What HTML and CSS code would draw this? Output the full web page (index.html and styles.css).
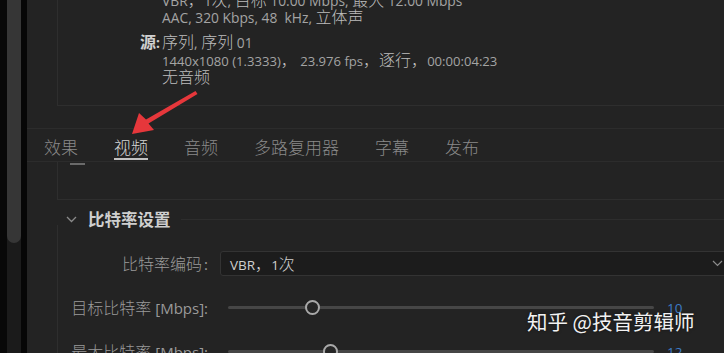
FILE: index.html
```html
<!DOCTYPE html>
<html lang="zh-CN">
<head>
<meta charset="utf-8">
<title>导出设置</title>
<link rel="stylesheet" href="styles.css">
</head>
<body>
<div class="app">
  <div class="edge"></div>
  <div class="scroll"><div class="thumb"></div></div>
  <div class="edge2"></div>
  <main class="panel">
    <section class="summary">
      <div class="info">
        <div class="lbl"></div>
        <div class="vals">
          <div class="line">VBR<span class="z">，</span>1<span class="z">次</span>, <span class="z">目标</span> 10.00 Mbps, <span class="z">最大</span> 12.00 Mbps</div>
          <div class="line">AAC, 320 Kbps, 48&nbsp; kHz, <span class="z">立体声</span></div>
        </div>
        <div class="lbl"><span class="z">源</span><b>:</b></div>
        <div class="vals">
          <div class="line"><span class="z">序列</span>, <span class="z">序列</span> 01</div>
          <div class="line tight">1440x1080 (1.3333)<span class="z">，</span> 23.976 fps<span class="z">，逐行，</span>00:00:04:23</div>
          <div class="line"><span class="z">无音频</span></div>
        </div>
      </div>
    </section>

    <nav class="tabs">
      <span class="tab">效果</span>
      <span class="tab on">视频</span>
      <span class="tab">音频</span>
      <span class="tab">多路复用器</span>
      <span class="tab">字幕</span>
      <span class="tab">发布</span>
    </nav>

    <div class="ghostbox"><span class="ghost"></span></div>

    <section class="bitrate">
      <header class="sec-head">
        <svg class="chev" width="11" height="7" viewBox="0 0 11 7"><polyline points="1,1 5.5,5.5 10,1" fill="none" stroke="#8a8a8a" stroke-width="1.3"/></svg>
        <h2>比特率设置</h2>
        <span class="rule"></span>
      </header>
      <div class="sec-body">
        <div class="lab"><span class="z">比特率编码</span><span class="colon">:</span></div>
        <div class="select">
          <span class="sel-text">VBR<span class="z">，</span>1<span class="z">次</span></span>
          <svg class="sel-chev" width="11" height="7" viewBox="0 0 11 7"><polyline points="1,1 5.5,5.5 10,1" fill="none" stroke="#8c8c8c" stroke-width="1.2"/></svg>
        </div>

        <div class="lab"><span class="z">目标比特率</span> [Mbps]:</div>
        <div class="slider">
          <div class="track"><span class="knob" style="left:84px"></span></div>
          <span class="val">10</span>
        </div>

        <div class="lab"><span class="z">最大比特率</span> [Mbps]:</div>
        <div class="slider">
          <div class="track"><span class="knob" style="left:102px"></span></div>
          <span class="val">12</span>
        </div>
      </div>
    </section>
  </main>
</div>

<div class="watermark">知乎 @技音剪辑师</div>

<svg class="arrow" width="724" height="353" viewBox="0 0 724 353">
  <polygon points="132,134 139,113 146,119.5 195.5,91 197.5,94 148.5,123.5 154,130" fill="#e6373b"/>
</svg>
</body>
</html>
```

FILE: styles.css
```css
* { box-sizing: border-box; margin: 0; padding: 0; }

html, body {
  width: 724px;
  height: 353px;
  overflow: hidden;
  background: #232323;
}

body {
  position: relative;
  font-family: "Open Sans", "Noto Sans CJK SC", sans-serif;
  font-size: 13px;
  color: #a4a4a4;
}

.app {
  display: flex;
  height: 353px;
}

.edge { width: 7px; background: #080808; }
.scroll { width: 14px; background: #1b1b1b; }
.thumb {
  height: 243px;
  background: #363636;
  border-radius: 0 0 7px 7px;
}
.edge2 { width: 6px; background: #060606; }

.panel {
  flex: 1;
  min-width: 0;
  background: #232323;
  overflow: hidden;
}

.z {
  font-family: "Noto Sans CJK SC", sans-serif;
  font-size: 16px;
}

/* summary */
.summary {
  margin-left: 30px;
  height: 106px;
  border-left: 1px solid #2e2e2e;
  border-bottom: 1px solid #2e2e2e;
  overflow: hidden;
}

.info {
  display: grid;
  grid-template-columns: 102px 1fr;
  column-gap: 2px;
  row-gap: 7.7px;
  margin-top: -9px;
  font-size: 13.8px;
}

.lbl {
  text-align: right;
  height: 17.3px;
  line-height: 17.3px;
  color: #d0d0d0;
}
.lbl .z { font-weight: 700; }
.lbl b { font-weight: 700; }

.line {
  height: 17.3px;
  line-height: 17.3px;
  white-space: nowrap;
}
.line.tight { font-size: 13.1px; }
.line .z { color: #bdbdbd; font-weight: 300; }

/* tabs */
.tabs {
  margin-top: 22px;
  height: 34px;
  border-top: 1px solid #2c2c2c;
  border-bottom: 1px solid #2c2c2c;
  display: flex;
  align-items: flex-start;
  gap: 36px;
  padding-left: 17px;
}

.tab {
  font-family: "Noto Sans CJK SC", sans-serif;
  font-size: 17px;
  font-weight: 300;
  line-height: 17px;
  padding-top: 9px;
  padding-bottom: 2.5px;
  border-bottom: 2.5px solid transparent;
  color: #8a8a8a;
  white-space: nowrap;
}
.tab.on {
  color: #d6d6d6;
  border-bottom-color: #c2c2c2;
}

.ghostbox {
  margin-left: 30px;
  height: 38px;
  border-left: 1px solid #2e2e2e;
  border-bottom: 1px solid #2e2e2e;
  padding: 1px 0 0 12px;
}
.ghost {
  display: block;
  width: 15px;
  height: 2px;
  background: #6a6a6a;
}

/* bitrate section */
.bitrate {
  margin-left: 30px;
  height: 160px;
  background: linear-gradient(#2e2e2e, #2e2e2e) no-repeat 0 25px / 1px 200px;
}

.sec-head {
  height: 38px;
  display: flex;
  align-items: center;
  padding-left: 9px;
}
.chev { margin-right: 11px; flex: none; }
.sec-head h2 {
  font-family: "Noto Sans CJK SC", sans-serif;
  font-size: 16.5px;
  font-weight: 700;
  line-height: 20px;
  color: #cfcfcf;
  white-space: nowrap;
}
.rule {
  flex: 1;
  height: 1px;
  background: #2d2d2d;
  margin-left: 10px;
}

.sec-body {
  display: grid;
  grid-template-columns: 151px 1fr;
  grid-auto-rows: 25px;
  column-gap: 12px;
  row-gap: 19px;
  padding-top: 13px;
  align-items: center;
}

.lab {
  text-align: right;
  white-space: nowrap;
  line-height: 25px;
  font-size: 15px;
  color: #9a9a9a;
}
.lab .z { font-weight: 300; }
.colon { margin-left: 2px; }

.select {
  height: 25px;
  margin-right: -6px;
  border: 1px solid #333;
  border-radius: 3px;
  background: #1c1c1c;
  display: flex;
  align-items: center;
  padding: 0 6px 0 9px;
  color: #cfcfcf;
}
.sel-text { white-space: nowrap; line-height: 22px; font-size: 13.5px; }
.sel-text .z { font-weight: 300; }
.sel-chev { margin-left: auto; }

.slider {
  display: flex;
  align-items: center;
  padding-left: 8px;
  height: 25px;
}
.track {
  position: relative;
  width: 426px;
  height: 3px;
  background: #464646;
  border-radius: 2px;
}
.knob {
  position: absolute;
  top: 50%;
  width: 15px;
  height: 15px;
  margin: -7.5px 0 0 -7.5px;
  border: 2.5px solid #a9a9a9;
  border-radius: 50%;
  background: #262626;
}
.val {
  margin-left: 13px;
  color: #3c7cc8;
  font-size: 13.5px;
}

/* overlays */
.watermark {
  position: absolute;
  left: 527px;
  top: 309px;
  font-family: "Noto Sans CJK SC", sans-serif;
  font-size: 20.5px;
  line-height: 24px;
  color: #f2f2f2;
  white-space: nowrap;
  text-shadow: 0 0 3px rgba(0, 0, 0, 0.55);
}

.arrow {
  position: absolute;
  left: 0;
  top: 0;
  pointer-events: none;
}
```
